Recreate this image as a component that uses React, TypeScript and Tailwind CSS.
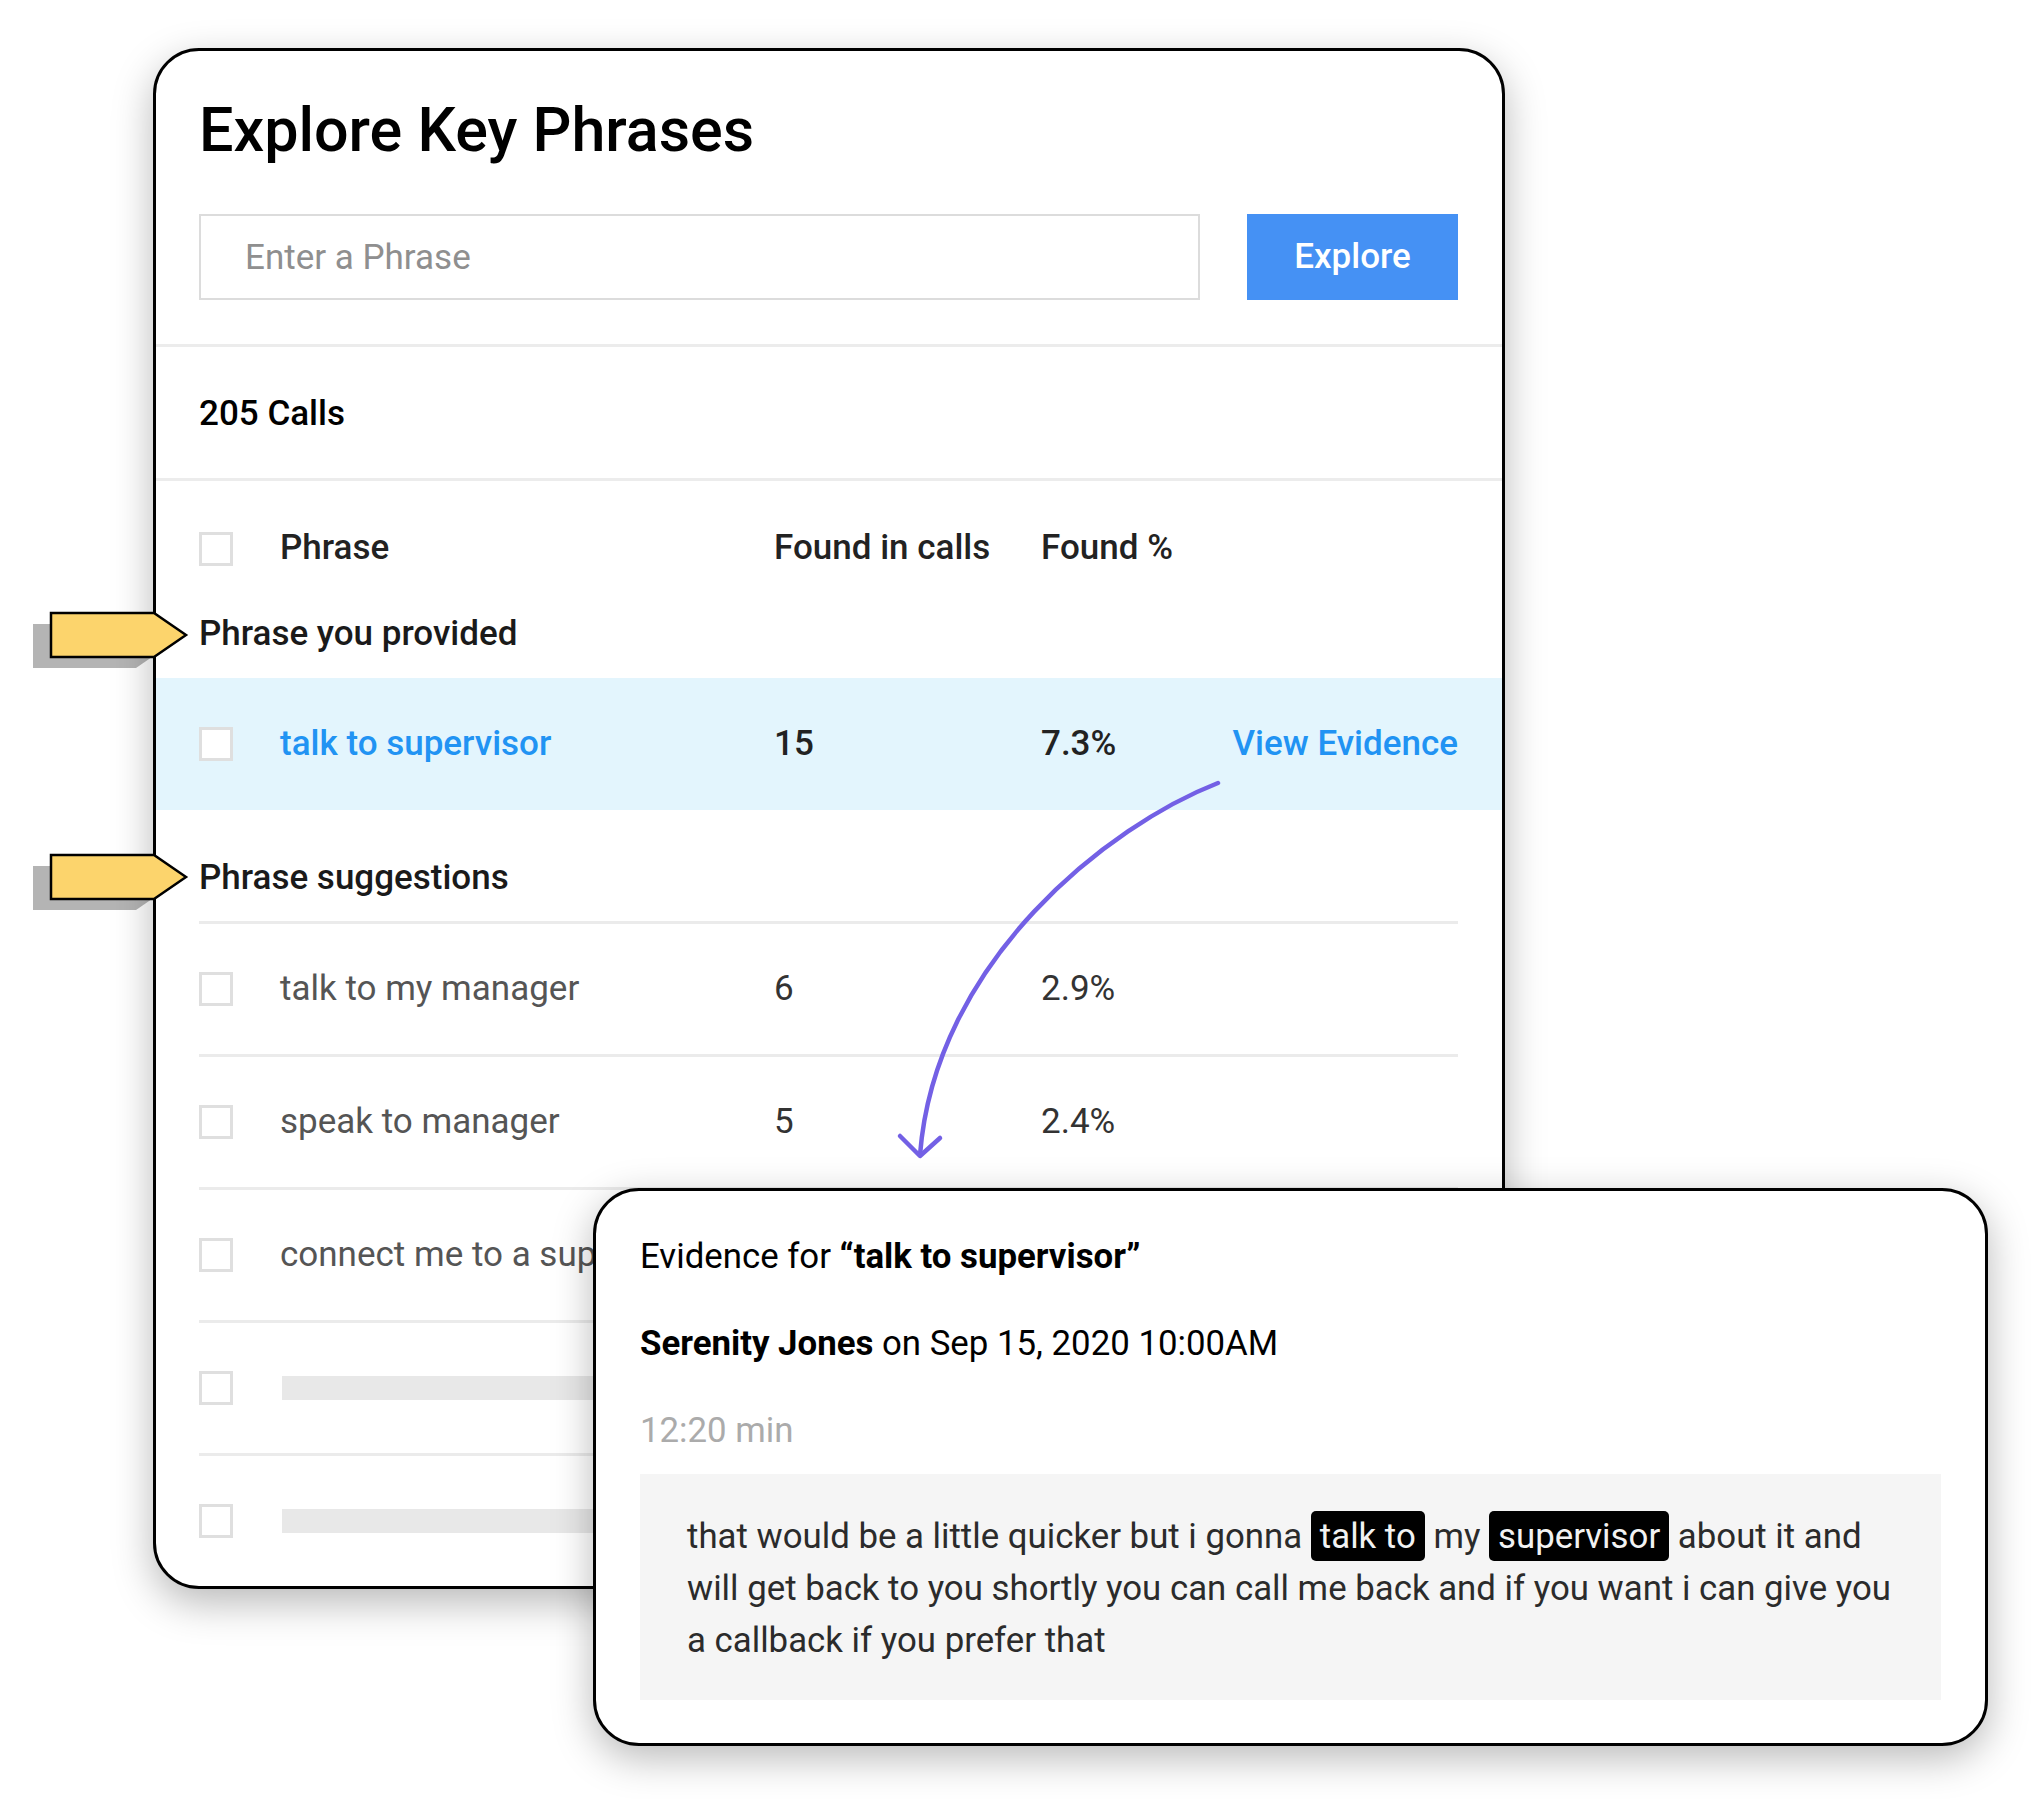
import React from 'react';

// Key phrases explorer + evidence popover mock

const Checkbox = () => (
  <div className="w-[34px] h-[34px] border-[3px] border-[#dfdfdf] bg-white" />
);

interface SuggestionProps {
  phrase?: string;
  calls?: string;
  pct?: string;
  skeleton?: boolean;
}

function SuggestionRow({ phrase, calls, pct, skeleton }: SuggestionProps) {
  return (
    <div className="border-t-[3px] border-[#ebebeb] h-[133px] grid grid-cols-[81px_494px_267px_1fr] items-center">
      <Checkbox />
      {skeleton ? (
        <div className="h-[24px] w-[420px] ml-[2px] bg-[#e8e8e8]" />
      ) : (
        <span className="text-[35px] text-[#555] whitespace-nowrap">{phrase}</span>
      )}
      <span className="text-[35px] text-[#333]">{calls}</span>
      <span className="text-[35px] text-[#333]">{pct}</span>
    </div>
  );
}

function Tags() {
  return (
    <>
      {/* shadows sit under the card */}
      <svg className="absolute left-0 top-0 z-0" width="220" height="940" viewBox="0 0 220 940">
        <g fill="#b4b4b4">
          <polygon points="33,624 136,624 168,646 136,668 33,668" />
          <polygon points="33,866 136,866 168,888 136,910 33,910" />
        </g>
      </svg>
      <svg className="absolute left-0 top-0 z-20" width="220" height="940" viewBox="0 0 220 940">
        <g fill="#fcd46c" stroke="#000" strokeWidth="2.5" strokeLinejoin="miter">
          <polygon points="51,613 154,613 186,635 154,657 51,657" />
          <polygon points="51,855 154,855 186,877 154,899 51,899" />
        </g>
      </svg>
    </>
  );
}

function CurvedArrow() {
  return (
    <svg className="absolute left-0 top-0 z-20 pointer-events-none" width="2036" height="1799" viewBox="0 0 2036 1799">
      <g fill="none" stroke="#7360e5" strokeWidth="4.5" strokeLinecap="round" strokeLinejoin="round">
        <path d="M1218 783 C 1110 825, 935 960, 920 1155" />
        <path d="M900 1136 L920 1156 L940 1138" />
      </g>
    </svg>
  );
}

function EvidenceCard() {
  return (
    <div className="absolute left-[593px] top-[1188px] z-30 w-[1395px] h-[558px] bg-white border-[3px] border-black rounded-[46px] shadow-[0_12px_40px_rgba(0,0,0,0.28)] px-[44px] pt-[41px]">
      <div className="text-[34.8px] leading-[48px] text-black">
        Evidence for <span className="font-bold">“talk to supervisor”</span>
      </div>
      <div className="mt-[39px] text-[34.8px] leading-[48px] text-black">
        <span className="font-bold">Serenity Jones</span> on Sep 15, 2020 10:00AM
      </div>
      <div className="mt-[39px] text-[34.8px] leading-[48px] text-[#ababab]">12:20 min</div>
      <div className="mt-[20px] bg-[#f5f5f5] pl-[47px] pr-[30px] pt-[36px] pb-[34px] text-[34.8px] leading-[52px] text-[#2b2b2b]">
        <div>
          that would be a little quicker but i gonna{' '}
          <span className="bg-black text-[#f2f2f2] rounded-[5px] px-[9px] py-[5px]">talk to</span> my{' '}
          <span className="bg-black text-[#f2f2f2] rounded-[5px] px-[9px] py-[5px]">supervisor</span> about it and
        </div>
        <div>will get back to you shortly you can call me back and if you want i can give you</div>
        <div>a callback if you prefer that</div>
      </div>
    </div>
  );
}

export default function App() {
  return (
    <div className="relative w-[2036px] h-[1799px] bg-white overflow-hidden font-[family-name:Roboto,'Liberation_Sans',sans-serif]">
      <Tags />
      <CurvedArrow />

      <div className="pl-[153px] pt-[48px]">
        <div className="relative z-10 w-[1352px] h-[1541px] bg-white border-[3px] border-black rounded-[46px] overflow-hidden shadow-[0_14px_40px_rgba(0,0,0,0.28)]">
          {/* Search */}
          <div className="pl-[43px] pr-[44px] pt-[43px] pb-[44px] border-b-[3px] border-[#ececec]">
            <h1 className="text-[61px] leading-[72px] font-medium text-black">Explore Key Phrases</h1>
            <div className="mt-[48px] flex gap-[47px]">
              <input
                readOnly
                placeholder="Enter a Phrase"
                className="flex-1 h-[86px] border-[2px] border-[#dcdcdc] px-[44px] text-[35px] text-[#333] placeholder:text-[#8f8f8f] outline-none"
              />
              <button className="w-[211px] h-[86px] bg-[#4591f4] text-white text-[35px] font-medium">Explore</button>
            </div>
          </div>

          {/* Count */}
          <div className="h-[134px] pl-[43px] pt-[4px] flex items-center border-b-[3px] border-[#ececec]">
            <span className="text-[35px] font-medium text-black">205 Calls</span>
          </div>

          {/* Header */}
          <div className="h-[109px] pt-[26px] pl-[43px] pr-[44px] grid grid-cols-[81px_494px_267px_1fr] items-center">
            <Checkbox />
            <span className="text-[35px] font-medium text-[#222]">Phrase</span>
            <span className="text-[35px] font-medium text-[#222]">Found in calls</span>
            <span className="text-[35px] font-medium text-[#222]">Found %</span>
          </div>

          <div className="h-[88px] pl-[43px] flex items-center">
            <span className="text-[35px] font-medium text-[#1a1a1a]">Phrase you provided</span>
          </div>

          {/* Provided phrase */}
          <div className="h-[132px] bg-[#e3f5fd] pl-[43px] pr-[44px] grid grid-cols-[81px_494px_267px_1fr_auto] items-center">
            <Checkbox />
            <span className="text-[35px] font-medium text-[#2193f3]">talk to supervisor</span>
            <span className="text-[35px] font-medium text-[#222]">15</span>
            <span className="text-[35px] font-medium text-[#222]">7.3%</span>
            <span className="text-[35px] font-medium text-[#2193f3]">View Evidence</span>
          </div>

          <div className="h-[111px] pt-[26px] pl-[43px] flex items-center">
            <span className="text-[35px] font-medium text-[#1a1a1a]">Phrase suggestions</span>
          </div>

          {/* Suggestions */}
          <div className="ml-[43px] mr-[44px]">
            <SuggestionRow phrase="talk to my manager" calls="6" pct="2.9%" />
            <SuggestionRow phrase="speak to manager" calls="5" pct="2.4%" />
            <SuggestionRow phrase="connect me to a supervisor" />
            <SuggestionRow skeleton />
            <SuggestionRow skeleton />
          </div>
        </div>
      </div>

      <EvidenceCard />
    </div>
  );
}
